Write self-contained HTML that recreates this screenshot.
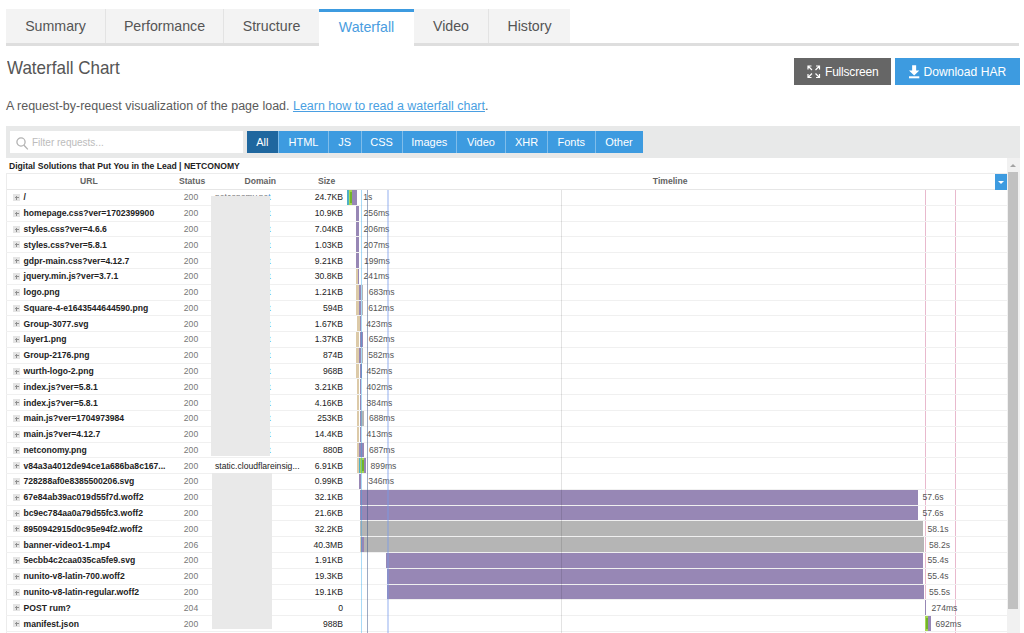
<!DOCTYPE html>
<html><head><meta charset="utf-8">
<style>
*{box-sizing:border-box;margin:0;padding:0}
html,body{width:1024px;height:633px;overflow:hidden;background:#fff;font-family:"Liberation Sans",sans-serif;position:relative}
.abs{position:absolute}
/* tabs */
#tabs{position:absolute;left:6px;top:9px;width:1013px;height:37px;border-bottom:3px solid #dedede}
.tab{position:absolute;top:0;height:34px;background:#f3f3f3;color:#555;font-size:14.2px;line-height:35px;text-align:center;border-left:1px solid #e3e3e3}
.tab.first{border-left:none}
.tab.act{background:#fff;color:#4a9de0;border-top:3px solid #3d9be0;line-height:30px;height:37px;border-left:none}
h1{position:absolute;left:7px;top:59px;font-size:17px;transform:scaleY(1.08);transform-origin:0 100%;font-weight:normal;color:#555;white-space:nowrap}
.btn{position:absolute;top:58px;height:27px;color:#fff;font-size:12px;line-height:29.5px;white-space:nowrap}
#fs{left:794px;width:97px;background:#666}
#dh{left:895px;width:125px;background:#3d9be0}
#desc{position:absolute;left:6px;top:99px;font-size:12.47px;color:#5a5a5a;white-space:nowrap}
#desc a{color:#4a9fe2;text-decoration:underline}
#fbar{position:absolute;left:6px;top:126px;width:1014px;height:32px;background:#e8e9e9}
#inp{position:absolute;left:4px;top:5px;width:232.5px;height:22px;background:#fff}
#inp span{position:absolute;left:22px;top:6px;font-size:10px;color:#bcbcbc;white-space:nowrap}
.fb{position:absolute;top:4.7px;height:22px;background:#3d9be0;color:#fff;font-size:11px;line-height:22px;text-align:center;border-left:1px solid #80bdea}
.fb.all{background:#1f679f;border-left:none}
#title{position:absolute;left:9px;top:160.8px;font-size:8.6px;font-weight:bold;color:#222;white-space:nowrap}
#tbl{position:absolute;left:6px;top:173px;width:1001px;height:460px;border-left:1px solid #ececec;border-top:1px solid #ececec}
#hdr{position:absolute;left:0;top:0;width:1000px;height:16px;border-bottom:1px solid #e6e6e6;font-size:8.6px;font-weight:bold;color:#636363}
#hdr span{position:absolute;top:1.9px;white-space:nowrap}
.r{position:absolute;left:6px;width:1001px;height:16px;border-bottom:1px solid #f0f0f0;font-size:8.6px}
.r span{position:absolute;top:calc(2.4px + var(--o));white-space:nowrap}
.pl{left:7px;top:4px!important;width:7px;height:7px;background:linear-gradient(#8f8f8f,#8f8f8f) 1.5px 3px/4px 1px no-repeat,linear-gradient(#8f8f8f,#8f8f8f) 3px 1.5px/1px 4px no-repeat,#e4e4e4}
.u{left:17.5px;font-weight:bold;color:#222}
.st{left:165px;width:40px;text-align:center;color:#777}
.dm{left:209px;color:#222}
.dl{color:#777;position:static!important}
.dl b{color:#3d9be0;font-weight:normal}
.sz{left:290px;width:47px;text-align:right;color:#222}
.tl{position:absolute;left:339px;top:0;width:656px}
.b{position:absolute;top:0;height:100%;display:block}
.wait{background:#9787b5}
.recv{background:#b5b5b5}
.block{background:#dccaa8}
.dns{background:#4fb0c6}
.conn{background:#a5d650}
.conn2{background:#72b52a;top:2px!important;height:11px!important}
.lb{color:#555}
.vl{position:absolute;top:190px;height:443px;width:1px}
.redact{position:absolute;background:#e9e9e9}
#sb{position:absolute;left:1007px;top:158px;width:13px;height:475px;background:#f1f1f1}
#thumb{position:absolute;left:1.3px;top:13.5px;width:10px;height:437px;background:#c1c1c1}
</style></head><body>
<div id="tabs">
 <div class="tab first" style="left:0;width:99px">Summary</div>
 <div class="tab" style="left:99px;width:118px">Performance</div>
 <div class="tab" style="left:217px;width:96px">Structure</div>
 <div class="tab act" style="left:313px;width:95px">Waterfall</div>
 <div class="tab" style="left:408px;width:74px;border-left:none">Video</div>
 <div class="tab" style="left:482px;width:82px">History</div>
</div>
<h1>Waterfall Chart</h1>
<div class="btn" id="fs">
 <svg class="abs" style="left:12.8px;top:6.8px" width="14" height="14" viewBox="0 0 14 14" fill="none" stroke="#fff" stroke-width="1.2">
  <path d="M1 4.5V1h3.5M1 1l4 4M12.5 4.5V1H9M12.5 1L8.5 5M1 9v3.5h3.5M1 12.5l4-4M12.5 9v3.5H9M12.5 12.5l-4-4"/>
 </svg>
 <span class="abs" style="left:31px;top:6.6px;font-size:12px;line-height:normal;letter-spacing:-0.2px">Fullscreen</span>
</div>
<div class="btn" id="dh">
 <svg class="abs" style="left:13.5px;top:6.5px" width="11" height="14" viewBox="0 0 11 14" fill="#fff">
  <path d="M3.15 0.3H7.15V5.5H10.3L5.15 10.6L0 5.5H3.15Z"/><rect x="0" y="11.3" width="10.3" height="2"/>
 </svg>
 <span class="abs" style="left:28.5px;top:6.6px;font-size:12.1px;line-height:normal">Download HAR</span>
</div>
<div id="desc">A request-by-request visualization of the page load. <a>Learn how to read a waterfall chart</a>.</div>
<div id="fbar">
 <div id="inp">
  <svg class="abs" style="left:5.5px;top:5.8px" width="14" height="14" viewBox="0 0 14 14" fill="none" stroke="#b2b2b2" stroke-width="1.3">
   <circle cx="5" cy="5" r="4.1"/><path d="M8 8.2l3.8 4.2"/>
  </svg>
  <span>Filter requests...</span>
 </div>
 <div class="fb all" style="left:240.5px;width:31.5px">All</div>
 <div class="fb" style="left:272px;width:50px">HTML</div>
 <div class="fb" style="left:322px;width:32.5px">JS</div>
 <div class="fb" style="left:354.5px;width:41px">CSS</div>
 <div class="fb" style="left:395.5px;width:54.5px">Images</div>
 <div class="fb" style="left:450px;width:49px">Video</div>
 <div class="fb" style="left:499px;width:42px">XHR</div>
 <div class="fb" style="left:541px;width:47.5px">Fonts</div>
 <div class="fb" style="left:588.5px;width:48px">Other</div>
</div>
<div id="title">Digital Solutions that Put You in the Lead | NETCONOMY</div>
<div id="tbl">
 <div id="hdr">
  <span style="left:73px">URL</span>
  <span style="left:172px">Status</span>
  <span style="left:237.5px">Domain</span>
  <span style="left:311px">Size</span>
  <span style="left:645.8px">Timeline</span>
  <div style="position:absolute;left:988px;top:0px;width:12px;height:15.5px;background:#3d9be0"><div style="position:absolute;left:3.3px;top:6.8px;width:0;height:0;border-left:3px solid transparent;border-right:3px solid transparent;border-top:3px solid #fff"></div></div>
 </div>
</div>
<div class="vl" style="left:925px;background:#e8b9cd"></div>
<div class="vl" style="left:954.5px;width:1.5px;background:#e8b9cd"></div>
<div class="r" style="top:190px;height:16px;--o:0.05px"><span class="pl"></span><span class="u">/</span><span class="st">200</span><span class="dm"><span class="dl">netconomy.ne<b>t</b></span></span><span class="sz">24.7KB</span><div class="tl" style="height:15px"><i class="b dns" style="left:2.00px;width:1.60px"></i><i class="b conn" style="left:3.60px;width:3.20px"></i><i class="b conn2" style="left:4.90px;width:1.90px"></i><i class="b wait" style="left:6.80px;width:5.00px"></i><span class="lb" style="left:18.20px">1s</span></div></div>
<div class="r" style="top:206px;height:16px;--o:-0.17px"><span class="pl"></span><span class="u">homepage.css?ver=1702399900</span><span class="st">200</span><span class="dm"><span class="dl">netconomy.ne<b>t</b></span></span><span class="sz">10.9KB</span><div class="tl" style="height:15px"><i class="b wait" style="left:11.40px;width:2.50px"></i><span class="lb" style="left:18.60px">256ms</span></div></div>
<div class="r" style="top:222px;height:15px;--o:-0.39px"><span class="pl"></span><span class="u">styles.css?ver=4.6.6</span><span class="st">200</span><span class="dm"><span class="dl">netconomy.ne<b>t</b></span></span><span class="sz">7.04KB</span><div class="tl" style="height:14px"><i class="b wait" style="left:11.30px;width:2.60px"></i><span class="lb" style="left:18.60px">206ms</span></div></div>
<div class="r" style="top:237px;height:16px;--o:0.39px"><span class="pl"></span><span class="u">styles.css?ver=5.8.1</span><span class="st">200</span><span class="dm"><span class="dl">netconomy.ne<b>t</b></span></span><span class="sz">1.03KB</span><div class="tl" style="height:15px"><i class="b wait" style="left:11.30px;width:2.60px"></i><span class="lb" style="left:18.60px">207ms</span></div></div>
<div class="r" style="top:253px;height:16px;--o:0.17px"><span class="pl"></span><span class="u">gdpr-main.css?ver=4.12.7</span><span class="st">200</span><span class="dm"><span class="dl">netconomy.ne<b>t</b></span></span><span class="sz">9.21KB</span><div class="tl" style="height:15px"><i class="b wait" style="left:11.30px;width:2.60px"></i><span class="lb" style="left:19.00px">199ms</span></div></div>
<div class="r" style="top:269px;height:16px;--o:-0.05px"><span class="pl"></span><span class="u">jquery.min.js?ver=3.7.1</span><span class="st">200</span><span class="dm"><span class="dl">netconomy.ne<b>t</b></span></span><span class="sz">30.8KB</span><div class="tl" style="height:15px"><i class="b block" style="left:11.00px;width:1.50px"></i><i class="b wait" style="left:12.50px;width:1.50px"></i><span class="lb" style="left:18.60px">241ms</span></div></div>
<div class="r" style="top:285px;height:16px;--o:-0.27px"><span class="pl"></span><span class="u">logo.png</span><span class="st">200</span><span class="dm"><span class="dl">netconomy.ne<b>t</b></span></span><span class="sz">1.21KB</span><div class="tl" style="height:15px"><i class="b block" style="left:11.30px;width:2.50px"></i><i class="b wait" style="left:13.80px;width:2.70px"></i><i class="b recv" style="left:16.50px;width:1.80px"></i><span class="lb" style="left:23.70px">683ms</span></div></div>
<div class="r" style="top:301px;height:15px;--o:-0.49px"><span class="pl"></span><span class="u">Square-4-e1643544644590.png</span><span class="st">200</span><span class="dm"><span class="dl">netconomy.ne<b>t</b></span></span><span class="sz">594B</span><div class="tl" style="height:14px"><i class="b block" style="left:11.30px;width:2.50px"></i><i class="b wait" style="left:13.80px;width:2.70px"></i><i class="b recv" style="left:16.50px;width:1.00px"></i><span class="lb" style="left:23.20px">612ms</span></div></div>
<div class="r" style="top:316px;height:16px;--o:0.29px"><span class="pl"></span><span class="u">Group-3077.svg</span><span class="st">200</span><span class="dm"><span class="dl">netconomy.ne<b>t</b></span></span><span class="sz">1.67KB</span><div class="tl" style="height:15px"><i class="b block" style="left:11.50px;width:3.00px"></i><i class="b wait" style="left:14.50px;width:1.50px"></i><span class="lb" style="left:21.30px">423ms</span></div></div>
<div class="r" style="top:332px;height:16px;--o:0.07px"><span class="pl"></span><span class="u">layer1.png</span><span class="st">200</span><span class="dm"><span class="dl">netconomy.ne<b>t</b></span></span><span class="sz">1.37KB</span><div class="tl" style="height:15px"><i class="b block" style="left:11.30px;width:3.20px"></i><i class="b wait" style="left:14.50px;width:3.50px"></i><span class="lb" style="left:23.70px">652ms</span></div></div>
<div class="r" style="top:348px;height:16px;--o:-0.15px"><span class="pl"></span><span class="u">Group-2176.png</span><span class="st">200</span><span class="dm"><span class="dl">netconomy.ne<b>t</b></span></span><span class="sz">874B</span><div class="tl" style="height:15px"><i class="b block" style="left:11.30px;width:2.50px"></i><i class="b wait" style="left:13.80px;width:2.70px"></i><i class="b recv" style="left:16.50px;width:1.00px"></i><span class="lb" style="left:23.20px">582ms</span></div></div>
<div class="r" style="top:364px;height:15px;--o:-0.37px"><span class="pl"></span><span class="u">wurth-logo-2.png</span><span class="st">200</span><span class="dm"><span class="dl">netconomy.ne<b>t</b></span></span><span class="sz">968B</span><div class="tl" style="height:14px"><i class="b block" style="left:11.30px;width:3.20px"></i><i class="b wait" style="left:14.50px;width:2.00px"></i><span class="lb" style="left:21.50px">452ms</span></div></div>
<div class="r" style="top:379px;height:16px;--o:0.41px"><span class="pl"></span><span class="u">index.js?ver=5.8.1</span><span class="st">200</span><span class="dm"><span class="dl">netconomy.ne<b>t</b></span></span><span class="sz">3.21KB</span><div class="tl" style="height:15px"><i class="b block" style="left:12.20px;width:2.30px"></i><i class="b wait" style="left:14.50px;width:1.50px"></i><span class="lb" style="left:21.60px">402ms</span></div></div>
<div class="r" style="top:395px;height:16px;--o:0.19px"><span class="pl"></span><span class="u">index.js?ver=5.8.1</span><span class="st">200</span><span class="dm"><span class="dl">netconomy.ne<b>t</b></span></span><span class="sz">4.16KB</span><div class="tl" style="height:15px"><i class="b block" style="left:12.20px;width:2.30px"></i><i class="b wait" style="left:14.50px;width:1.50px"></i><span class="lb" style="left:21.60px">384ms</span></div></div>
<div class="r" style="top:411px;height:16px;--o:-0.03px"><span class="pl"></span><span class="u">main.js?ver=1704973984</span><span class="st">200</span><span class="dm"><span class="dl">netconomy.ne<b>t</b></span></span><span class="sz">253KB</span><div class="tl" style="height:15px"><i class="b block" style="left:12.20px;width:2.30px"></i><i class="b wait" style="left:14.50px;width:1.50px"></i><i class="b recv" style="left:16.00px;width:2.80px"></i><span class="lb" style="left:24.00px">688ms</span></div></div>
<div class="r" style="top:427px;height:16px;--o:-0.25px"><span class="pl"></span><span class="u">main.js?ver=4.12.7</span><span class="st">200</span><span class="dm"><span class="dl">netconomy.ne<b>t</b></span></span><span class="sz">14.4KB</span><div class="tl" style="height:15px"><i class="b block" style="left:12.20px;width:2.30px"></i><i class="b wait" style="left:14.50px;width:1.50px"></i><span class="lb" style="left:21.60px">413ms</span></div></div>
<div class="r" style="top:443px;height:15px;--o:-0.47px"><span class="pl"></span><span class="u">netconomy.png</span><span class="st">200</span><span class="dm"><span class="dl">netconomy.ne<b>t</b></span></span><span class="sz">880B</span><div class="tl" style="height:14px"><i class="b block" style="left:12.20px;width:2.20px"></i><i class="b wait" style="left:14.40px;width:4.60px"></i><span class="lb" style="left:23.90px">687ms</span></div></div>
<div class="r" style="top:458px;height:16px;--o:0.31px"><span class="pl"></span><span class="u">v84a3a4012de94ce1a686ba8c167...</span><span class="st">200</span><span class="dm">static.cloudflareinsig...</span><span class="sz">6.91KB</span><div class="tl" style="height:15px"><i class="b block" style="left:12.00px;width:2.00px"></i><i class="b dns" style="left:14.00px;width:1.00px"></i><i class="b conn" style="left:15.00px;width:4.00px"></i><i class="b conn2" style="left:17.00px;width:2.00px"></i><i class="b wait" style="left:19.00px;width:1.70px"></i><span class="lb" style="left:25.60px">899ms</span></div></div>
<div class="r" style="top:474px;height:16px;--o:0.09px"><span class="pl"></span><span class="u">728288af0e8385500206.svg</span><span class="st">200</span><span class="dm"></span><span class="sz">0.99KB</span><div class="tl" style="height:15px"><i class="b wait" style="left:14.00px;width:2.00px"></i><span class="lb" style="left:23.20px">346ms</span></div></div>
<div class="r" style="top:490px;height:16px;--o:-0.13px"><span class="pl"></span><span class="u">67e84ab39ac019d55f7d.woff2</span><span class="st">200</span><span class="dm"></span><span class="sz">32.1KB</span><div class="tl" style="height:15px"><i class="b block" style="left:14.50px;width:0.60px"></i><i class="b wait" style="left:15.10px;width:557.80px"></i><span class="lb" style="left:577.60px">57.6s</span></div></div>
<div class="r" style="top:506px;height:15px;--o:-0.35px"><span class="pl"></span><span class="u">bc9ec784aa0a79d55fc3.woff2</span><span class="st">200</span><span class="dm"></span><span class="sz">21.6KB</span><div class="tl" style="height:14px"><i class="b block" style="left:14.50px;width:0.60px"></i><i class="b wait" style="left:15.10px;width:557.80px"></i><span class="lb" style="left:577.60px">57.6s</span></div></div>
<div class="r" style="top:521px;height:16px;--o:0.43px"><span class="pl"></span><span class="u">8950942915d0c95e94f2.woff2</span><span class="st">200</span><span class="dm"></span><span class="sz">32.2KB</span><div class="tl" style="height:15px"><i class="b block" style="left:14.50px;width:0.50px"></i><i class="b recv" style="left:15.00px;width:562.60px"></i><span class="lb" style="left:582.50px">58.1s</span></div></div>
<div class="r" style="top:537px;height:16px;--o:0.21px"><span class="pl"></span><span class="u">banner-video1-1.mp4</span><span class="st">206</span><span class="dm"></span><span class="sz">40.3MB</span><div class="tl" style="height:15px"><i class="b block" style="left:14.50px;width:1.50px"></i><i class="b wait" style="left:16.00px;width:3.00px"></i><i class="b recv" style="left:19.00px;width:560.10px"></i><span class="lb" style="left:584.00px">58.2s</span></div></div>
<div class="r" style="top:553px;height:16px;--o:-0.01px"><span class="pl"></span><span class="u">5ecbb4c2caa035ca5fe9.svg</span><span class="st">200</span><span class="dm"></span><span class="sz">1.91KB</span><div class="tl" style="height:15px"><i class="b wait" style="left:41.00px;width:536.60px"></i><span class="lb" style="left:582.50px">55.4s</span></div></div>
<div class="r" style="top:569px;height:16px;--o:-0.23px"><span class="pl"></span><span class="u">nunito-v8-latin-700.woff2</span><span class="st">200</span><span class="dm"></span><span class="sz">19.3KB</span><div class="tl" style="height:15px"><i class="b wait" style="left:41.50px;width:536.50px"></i><span class="lb" style="left:582.50px">55.4s</span></div></div>
<div class="r" style="top:585px;height:15px;--o:-0.45px"><span class="pl"></span><span class="u">nunito-v8-latin-regular.woff2</span><span class="st">200</span><span class="dm"></span><span class="sz">19.1KB</span><div class="tl" style="height:14px"><i class="b wait" style="left:41.50px;width:537.60px"></i><span class="lb" style="left:584.00px">55.5s</span></div></div>
<div class="r" style="top:600px;height:16px;--o:0.33px"><span class="pl"></span><span class="u">POST rum?</span><span class="st">204</span><span class="dm"></span><span class="sz">0</span><div class="tl" style="height:15px"><i class="b wait" style="left:579.50px;width:1.30px"></i><span class="lb" style="left:586.60px">274ms</span></div></div>
<div class="r" style="top:616px;height:16px;--o:0.11px"><span class="pl"></span><span class="u">manifest.json</span><span class="st">200</span><span class="dm"></span><span class="sz">988B</span><div class="tl" style="height:15px"><i class="b conn" style="left:579.50px;width:3.50px"></i><i class="b conn2" style="left:580.50px;width:2.00px"></i><i class="b wait" style="left:583.00px;width:3.00px"></i><span class="lb" style="left:590.40px">692ms</span></div></div>
<div class="vl" style="left:561px;background:rgba(0,0,0,0.11)"></div>
<div class="vl" style="left:361px;background:rgba(40,165,235,0.4)"></div>
<div class="vl" style="left:367px;background:rgba(60,85,135,0.5)"></div>
<div class="vl" style="left:387px;width:2px;background:rgba(120,155,235,0.4)"></div>
<div class="redact" style="left:210.5px;top:195.5px;width:59.5px;height:260px"></div>
<div class="redact" style="left:211.8px;top:473.2px;width:60px;height:155.7px"></div>
<div id="sb">
 <div style="position:absolute;left:3px;top:5.5px;width:0;height:0;border-left:3.5px solid transparent;border-right:3.5px solid transparent;border-bottom:3.5px solid #a3a3a3"></div>
 <div id="thumb"></div>
</div>
</body></html>
